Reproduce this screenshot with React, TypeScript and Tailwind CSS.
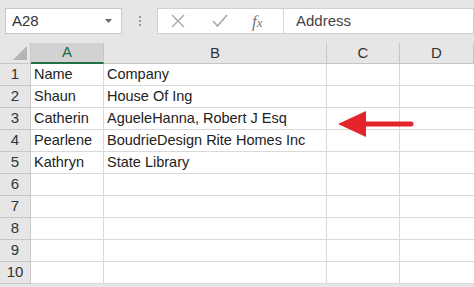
import React from 'react';

const cols = [
  { name: 'A', w: 'w-[73px]', selected: true },
  { name: 'B', w: 'w-[223px]' },
  { name: 'C', w: 'w-[73px]' },
  { name: 'D', w: 'flex-1' },
];

const rows: [string, string][] = [
  ['Name', 'Company'],
  ['Shaun', 'House Of Ing'],
  ['Catherin', 'AgueleHanna, Robert J Esq'],
  ['Pearlene', 'BoudrieDesign Rite Homes Inc'],
  ['Kathryn', 'State Library'],
  ['', ''],
  ['', ''],
  ['', ''],
  ['', ''],
  ['', ''],
];

export default function App() {
  return (
    <div className="relative w-[474px] h-[287px] overflow-hidden bg-[#e6e6e6] font-['Liberation_Sans',sans-serif] text-[#222]">
      {/* Formula bar */}
      <div className="flex items-center h-[43px] pl-[5px] pb-[6px] pt-[5px]">
        <div className="flex items-center justify-between w-[117px] h-[26px] bg-white border border-[#c8c8c8] pl-[6px] pr-[9px]">
          <span className="text-[15px] text-[#333]">A28</span>
          <svg width="7" height="4" viewBox="0 0 7 4"><path d="M0 0h7L3.5 4z" fill="#666" /></svg>
        </div>
        <div className="w-[35px] flex flex-col items-center gap-[2px]">
          <span className="w-[2px] h-[2px] bg-[#999]" />
          <span className="w-[2px] h-[2px] bg-[#999]" />
          <span className="w-[2px] h-[2px] bg-[#999]" />
        </div>
        <div className="flex-1 flex h-[26px] bg-white border border-[#d0d0d0]">
          <div className="flex items-center w-[126px] border-r border-[#d6d6d6]">
            <svg className="ml-[13px]" width="14" height="14" viewBox="0 0 14 14">
              <path d="M1 1l12 12M13 1L1 13" stroke="#a8a8a8" strokeWidth="1.4" fill="none" />
            </svg>
            <svg className="ml-[27px]" width="16" height="14" viewBox="0 0 16 14">
              <path d="M1 7l4.5 5L15 1" stroke="#a8a8a8" strokeWidth="1.6" fill="none" />
            </svg>
            <span className="ml-[24px] font-['Liberation_Serif',serif] italic text-[17px] leading-none text-[#777]">
              f<span className="text-[13px]">x</span>
            </span>
          </div>
          <div className="flex items-center pl-[12px] text-[15px] text-[#444]">Address</div>
        </div>
      </div>

      {/* Column headers */}
      <div className="flex h-[21px] bg-[#e6e6e6]">
        <div className="relative w-[31px] border-r border-b border-[#c6c6c6]">
          <svg className="absolute right-[3px] bottom-[3px]" width="14" height="14" viewBox="0 0 14 14">
            <path d="M14 0v14H0z" fill="#b4b4b4" />
          </svg>
        </div>
        {cols.map((c) => (
          <div
            key={c.name}
            className={
              c.selected
                ? `${c.w} flex items-center justify-center bg-[#d2d2d2] border-r border-[#c6c6c6] border-b-2 border-b-[#217346] text-[15px] text-[#1f6b41]`
                : `${c.w} flex items-center justify-center border-r border-b border-[#c6c6c6] text-[15px] text-[#333]`
            }
          >
            {c.name}
          </div>
        ))}
      </div>

      {/* Rows */}
      {rows.map((r, i) => (
        <div key={i} className="flex h-[22px]">
          <div className="w-[31px] flex items-center justify-center border-r border-b border-[#c6c6c6] text-[15px] text-[#333]">
            {i + 1}
          </div>
          <div className="w-[73px] flex items-center pl-[3px] bg-white border-r border-b border-[#d9d9d9] text-[14.5px] whitespace-nowrap">
            {r[0]}
          </div>
          <div className="w-[223px] flex items-center pl-[3px] bg-white border-r border-b border-[#d9d9d9] text-[14.5px] whitespace-nowrap">
            {r[1]}
          </div>
          <div className="w-[73px] bg-white border-r border-b border-[#d9d9d9]" />
          <div className="flex-1 bg-white border-b border-[#d9d9d9]" />
        </div>
      ))}

      {/* Red arrow annotation */}
      <svg className="absolute left-[337px] top-[111px]" width="78" height="26" viewBox="0 0 78 26">
        <path d="M1 13L29 0v26z" fill="#e3242b" />
        <path d="M28 13h46" stroke="#e3242b" strokeWidth="5" strokeLinecap="round" />
      </svg>
    </div>
  );
}
